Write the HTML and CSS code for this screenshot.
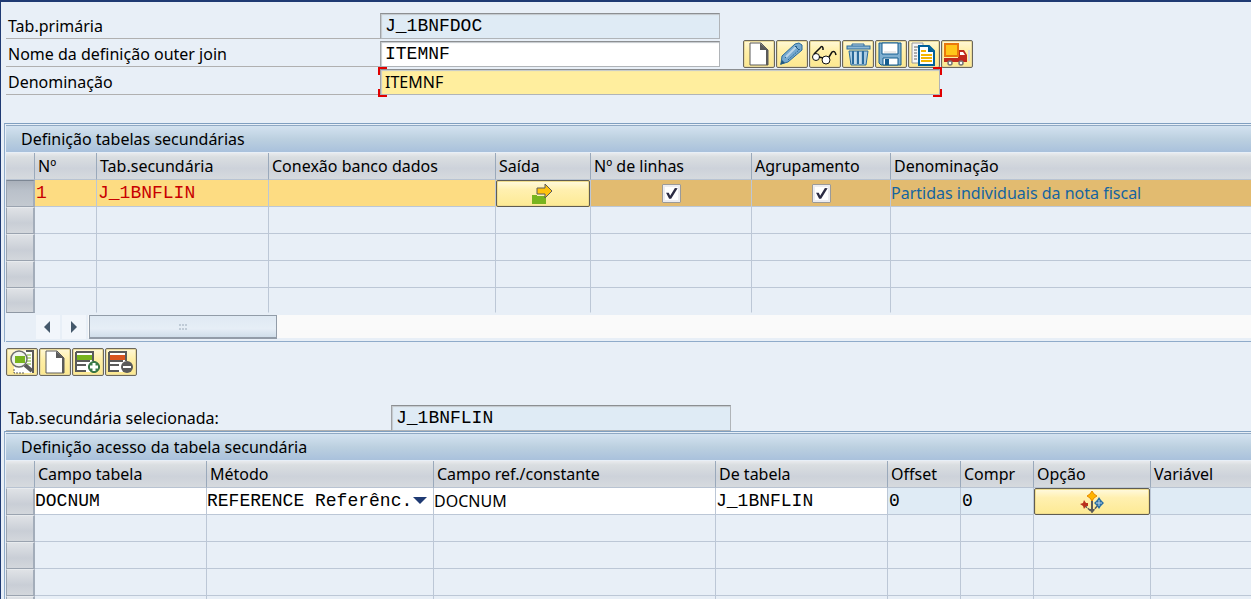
FILE: index.html
```
<!DOCTYPE html>
<html lang="pt-BR">
<head>
    <meta charset="UTF-8">
    <meta name="viewport" content="width=device-width, initial-scale=1.0">
    <title>Definição outer join</title>
    <link rel="stylesheet" href="styles.css">
</head>
<body>

<!-- shared icons -->
<svg class="sprite" aria-hidden="true">
    <symbol id="icon-page" viewBox="0 0 29 26">
        <path d="M6 2H17L24 9V24H6Z" fill="#fff" stroke="#5a5a5a"/>
        <path d="M16 2L24 9V24H22V9H16Z" fill="#5a5a5a"/>
    </symbol>
</svg>

<main class="screen">
    <form class="header-form">
        <div class="form-row">
            <label for="primary">Tab.primária</label>
            <input type="text" id="primary" class="field readonly mono" value="J_1BNFDOC" readonly>
        </div>
        <div class="form-row">
            <label for="join-name">Nome da definição outer join</label>
            <input type="text" id="join-name" class="field mono" value="ITEMNF">
            <div class="toolbar">
                <button type="button" class="tool" aria-label="Criar"><svg><use href="#icon-page"/></svg></button>
                <button type="button" class="tool" aria-label="Modificar">
                    <svg viewBox="0 0 29 26">
                        <path d="M4 23L5 15L18 3L22 2L25 4V9L11 21Z" fill="#76a9cf" stroke="#2a6a9b"/>
                        <path d="M8 17L20 5M11 19L23 8" stroke="#2a6a9b" stroke-dasharray="2 1"/>
                        <path d="M9 16L19 6" stroke="#b9d4e8" stroke-width="2"/>
                        <path d="M3 24L5 19L8 22Z" fill="#24597f"/>
                        <path d="M18 5L22 9" stroke="#24597f"/>
                    </svg>
                </button>
                <button type="button" class="tool" aria-label="Exibir">
                    <svg viewBox="0 0 29 26" fill="none" stroke="#111">
                        <circle cx="6" cy="16" r="3.5" fill="#fff"/>
                        <circle cx="16" cy="19" r="4" fill="#fff"/>
                        <path d="M9 16L13 17M4 13L10 7Q12 4 13 7V9M19 16L22 11Q25 9 26 14" stroke-width="1.5"/>
                    </svg>
                </button>
                <button type="button" class="tool" aria-label="Eliminar">
                    <svg viewBox="0 0 29 26">
                        <path d="M9 6V3H21V6" fill="#c4dbea" stroke="#2a6a9b"/>
                        <rect x="4" y="5" width="23" height="3" fill="#8db8d6" stroke="#2a6a9b"/>
                        <path d="M6 10H25L23 24H8Z" fill="#a9cbe1" stroke="#2a6a9b"/>
                        <path d="M10 10V23M15 10V23M20 10V23" stroke="#2a6a9b" stroke-width="2"/>
                        <path d="M12 11V23M17 11V23" stroke="#e4f0f7"/>
                    </svg>
                </button>
                <button type="button" class="tool" aria-label="Gravar">
                    <svg viewBox="0 0 29 26">
                        <path d="M3 2H25V24H5L3 22Z" fill="#7fafd0" stroke="#155c8e"/>
                        <path d="M6 2H22V13H6Z" fill="#fff" stroke="#155c8e"/>
                        <path d="M8 11H20" stroke="#d5d5d5"/>
                        <path d="M7 17H22V24H7Z" fill="#fff" stroke="#155c8e"/>
                        <path d="M9 18H13V24H9Z" fill="#155c8e"/>
                    </svg>
                </button>
                <button type="button" class="tool" aria-label="Copiar">
                    <svg viewBox="0 0 29 26">
                        <path d="M3 2H14V22H3Z" fill="#f7f7f7" stroke="#999"/>
                        <path d="M5 6H9M5 9H8M5 12H8M5 15H8M5 18H8" stroke="#666"/>
                        <path d="M10 5H20L25 10V24H10Z" fill="#fff" stroke="#00609a" stroke-width="2"/>
                        <path d="M19 5V11H25Z" fill="#00609a"/>
                        <path d="M12 10H17M12 14H23M12 17H23M12 20H23" stroke="#f5b400" stroke-width="2"/>
                    </svg>
                </button>
                <button type="button" class="tool" aria-label="Transportar">
                    <svg viewBox="0 0 29 26">
                        <path d="M26 9H28V20H26Z" fill="#d8d8d8"/>
                        <path d="M2 17H16V9H22L25 14V21H2Z" fill="#c0281c"/>
                        <path d="M18 11H21L23 14H18Z" fill="#fff"/>
                        <rect x="3" y="3" width="13" height="12" fill="#ffc61a" stroke="#e9780c" stroke-width="2"/>
                        <circle cx="8" cy="22" r="2" fill="#fff" stroke="#777" stroke-width="1.5"/>
                        <circle cx="19" cy="22" r="2" fill="#fff" stroke="#777" stroke-width="1.5"/>
                    </svg>
                </button>
            </div>
        </div>
        <div class="form-row">
            <label for="description">Denominação</label>
            <div class="focus-frame">
                <input type="text" id="description" class="field wide" value="ITEMNF">
            </div>
        </div>
    </form>

    <section class="panel">
        <h2>Definição tabelas secundárias</h2>
        <table class="grid">
            <colgroup>
                <col class="w-sel"><col class="w-num"><col class="w-table"><col class="w-method"><col class="w-output"><col class="w-lines"><col class="w-group"><col>
            </colgroup>
            <thead>
                <tr>
                    <th></th>
                    <th>Nº</th>
                    <th>Tab.secundária</th>
                    <th>Conexão banco dados</th>
                    <th>Saída</th>
                    <th>Nº de linhas</th>
                    <th>Agrupamento</th>
                    <th>Denominação</th>
                </tr>
            </thead>
            <tbody>
                <tr class="selected">
                    <td class="sel"></td>
                    <td class="mono">1</td>
                    <td class="mono">J_1BNFLIN</td>
                    <td></td>
                    <td>
                        <button type="button" class="cell-button" aria-label="Saída">
                            <svg viewBox="0 0 24 22">
                                <path d="M1 12H15V21H1Z" fill="#78b41e"/>
                                <path d="M6 10H16V13H6Z" fill="#fff3b8"/>
                                <path d="M6 5H14V1L21 8L14 15V11H6Z" fill="#ffc20e" stroke="#5a5a5a"/>
                            </svg>
                        </button>
                    </td>
                    <td class="dark check"><input type="checkbox" aria-label="Nº de linhas" checked></td>
                    <td class="dark check"><input type="checkbox" aria-label="Agrupamento" checked></td>
                    <td class="dark note">Partidas individuais da nota fiscal</td>
                </tr>
                <tr><td class="sel"></td><td></td><td></td><td></td><td></td><td></td><td></td><td></td></tr>
                <tr><td class="sel"></td><td></td><td></td><td></td><td></td><td></td><td></td><td></td></tr>
                <tr><td class="sel"></td><td></td><td></td><td></td><td></td><td></td><td></td><td></td></tr>
                <tr class="last"><td class="sel"></td><td></td><td></td><td></td><td></td><td></td><td></td><td></td></tr>
            </tbody>
        </table>
        <div class="scrollbar">
            <button type="button" class="arrow" aria-label="Esquerda"><svg viewBox="0 0 24 24"><path d="M14 6V18L8 12Z" fill="#44586b"/></svg></button>
            <button type="button" class="arrow" aria-label="Direita"><svg viewBox="0 0 24 24"><path d="M9 6V18L15 12Z" fill="#44586b"/></svg></button>
            <div class="track">
                <div class="thumb">
                    <svg viewBox="0 0 8 6"><path d="M0 1H2M3 1H5M6 1H8M0 5H2M3 5H5M6 5H8" stroke="#9aa9b8"/></svg>
                </div>
            </div>
        </div>
    </section>

    <div class="toolbar table-tools">
        <button type="button" class="tool" aria-label="Detalhes">
            <svg viewBox="0 0 29 26">
                <path d="M7 2H26V24H7Z" fill="#fff"/>
                <path d="M19 2H26V24" fill="none" stroke="#5a5a5a" stroke-width="2"/>
                <path d="M20 6H24M20 9H24M20 12H24M20 15H24" stroke="#78b41e"/>
                <path d="M7 20V24H18" fill="none" stroke="#5a5a5a" stroke-dasharray="2 1"/>
                <circle cx="12" cy="10" r="8" fill="#f2f5ee" stroke="#6d6d6d" stroke-width="1.5"/>
                <path d="M8 7H18V14H8Z" fill="#78b41e"/>
                <path d="M18 16L25 22" stroke="#5a5a5a" stroke-width="4"/>
            </svg>
        </button>
        <button type="button" class="tool" aria-label="Criar"><svg><use href="#icon-page"/></svg></button>
        <button type="button" class="tool" aria-label="Inserir linha">
            <svg viewBox="0 0 29 26">
                <path d="M3 2H21V23H3Z" fill="#fff"/>
                <path d="M3 3H20V12M3 3V23M3 12H17M3 16H13M3 22H13" fill="none" stroke="#5a5a5a" stroke-width="2"/>
                <path d="M4 6H19V11H4Z" fill="#78b41e"/>
                <circle cx="21" cy="18" r="5.5" fill="#3c7d4a" stroke="#2e6a3d"/>
                <path d="M21 14V22M17 18H25" stroke="#fff" stroke-width="3"/>
            </svg>
        </button>
        <button type="button" class="tool" aria-label="Eliminar linha">
            <svg viewBox="0 0 29 26">
                <path d="M3 2H21V23H3Z" fill="#fff"/>
                <path d="M3 3H20V12M3 3V23M3 12H17M3 16H13M3 22H13" fill="none" stroke="#5a5a5a" stroke-width="2"/>
                <path d="M4 6H19V11H4Z" fill="#d9541e"/>
                <circle cx="21" cy="18" r="6" fill="#5a5a5a"/>
                <path d="M17 18H25" stroke="#fff" stroke-width="2"/>
            </svg>
        </button>
    </div>

    <div class="form-row selected-table">
        <label for="secondary">Tab.secundária selecionada:</label>
        <input type="text" id="secondary" class="field readonly mono" value="J_1BNFLIN" readonly>
    </div>

    <section class="panel">
        <h2>Definição acesso da tabela secundária</h2>
        <table class="grid">
            <colgroup>
                <col class="w-sel"><col class="w-table"><col class="w-method"><col class="w-ref"><col class="w-table"><col class="w-size"><col class="w-size"><col class="w-option"><col>
            </colgroup>
            <thead>
                <tr>
                    <th></th>
                    <th>Campo tabela</th>
                    <th>Método</th>
                    <th>Campo ref./constante</th>
                    <th>De tabela</th>
                    <th>Offset</th>
                    <th>Compr</th>
                    <th>Opção</th>
                    <th>Variável</th>
                </tr>
            </thead>
            <tbody>
                <tr>
                    <td class="sel"></td>
                    <td class="edit"><input type="text" class="mono" aria-label="Campo tabela" value="DOCNUM"></td>
                    <td class="edit combo">
                        <select class="mono" aria-label="Método">
                            <option>REFERENCE Referênc..</option>
                        </select>
                    </td>
                    <td class="edit"><input type="text" aria-label="Campo ref./constante" value="DOCNUM"></td>
                    <td class="edit"><input type="text" class="mono" aria-label="De tabela" value="J_1BNFLIN"></td>
                    <td class="mono locked">0</td>
                    <td class="mono locked">0</td>
                    <td>
                        <button type="button" class="cell-button" aria-label="Opção">
                            <svg viewBox="0 0 24 22">
                                <path d="M4 14L12 21L19 13" fill="none" stroke="#5a5a5a" stroke-width="1.5" stroke-dasharray="4 1"/>
                                <path d="M12 7V20" stroke="#5a5a5a" stroke-width="2"/>
                                <path d="M9 18H15L12 22Z" fill="#5a5a5a"/>
                                <path d="M12 0L14 3L17 5L14 7L12 10L10 7L7 5L10 3Z" fill="#ffb400" stroke="#e88b00"/>
                                <path d="M4 9L6 12H8V15H6L4 18L3 15L0 13L3 12Z" fill="#b9301c"/>
                                <path d="M19 6L21 9L24 12L21 15L19 18L17 15L14 12L17 9Z" fill="#2a6fa3"/>
                                <path d="M19 9V15M16 12H22" stroke="#b9d4e8"/>
                            </svg>
                        </button>
                    </td>
                    <td class="locked"></td>
                </tr>
                <tr><td class="sel"></td><td></td><td></td><td></td><td></td><td></td><td></td><td></td><td></td></tr>
                <tr><td class="sel"></td><td></td><td></td><td></td><td></td><td></td><td></td><td></td><td></td></tr>
                <tr><td class="sel"></td><td></td><td></td><td></td><td></td><td></td><td></td><td></td><td></td></tr>
                <tr><td class="sel"></td><td></td><td></td><td></td><td></td><td></td><td></td><td></td><td></td></tr>
            </tbody>
        </table>
    </section>
</main>

</body>
</html>
```
FILE: styles.css
```
*,
*::before,
*::after {
    box-sizing: border-box;
}

body {
    margin: 0;
    height: 100vh;
    overflow: hidden;
    background-color: #e8eff7;
    color: #000;
    font-family: "Noto Sans", Tahoma, sans-serif;
    font-size: 16px;
    font-variant-ligatures: none;
}

.sprite {
    display: none;
}

.screen {
    min-height: 100vh;
    border-top: 2px solid #1f3a73;
    border-left: 1px solid #1f3a73;
    padding-left: 3px;
}

input,
select,
button {
    margin: 0;
    font: inherit;
    color: inherit;
}

.mono {
    font-family: "Liberation Mono", "Courier New", monospace;
    font-size: 18px;
}

/* form */
.header-form {
    display: flex;
    flex-direction: column;
    gap: 2px;
    padding: 11px 0 28px 2px;
}

.form-row {
    display: flex;
    height: 26px;
}

.form-row label {
    width: 374px;
    padding-left: 2px;
    line-height: 26px;
    border-bottom: 1px solid #b0b0b0;
}

.field {
    width: 340px;
    height: 26px;
    padding: 0 4px;
    background-color: #fff;
    border: 1px solid #b0b4b8;
    border-top: 1px solid #8c8f92;
    border-left: 1px solid #a0a3a6;
    box-shadow: inset 1px 1px 1px #c4c8cc;
    outline: none;
}

.field.readonly {
    background-color: #dfebf5;
}

.field.wide {
    display: block;
    width: 560px;
    background-color: #ffee9e;
}

/* red corners round the active field */
.focus-frame {
    position: relative;
}

.focus-frame::before,
.focus-frame::after {
    content: "";
    position: absolute;
    top: -2px;
    bottom: -2px;
    width: 9px;
    background:
        linear-gradient(#e00000, #e00000) 0 0 / 100% 2px no-repeat,
        linear-gradient(#e00000, #e00000) 0 100% / 100% 2px no-repeat;
}

.focus-frame::before {
    left: -2px;
    border-left: 2px solid;
    border-image: linear-gradient(#e00000 9px, transparent 9px calc(100% - 9px), #e00000 calc(100% - 9px)) 2;
}

.focus-frame::after {
    right: -2px;
    border-right: 2px solid;
    border-image: linear-gradient(#e00000 9px, transparent 9px calc(100% - 9px), #e00000 calc(100% - 9px)) 2;
}

.toolbar {
    display: flex;
    gap: 1px;
}

.form-row .toolbar {
    margin: -1px 0 -1px 23px;
}

.tool {
    width: 32px;
    height: 28px;
    padding: 0;
    border: 1px solid #6b675c;
    border-radius: 2px;
    background: linear-gradient(#fff8d8, #ffefa8 40%, #fce88f);
    box-shadow: inset 0 0 0 1px #e8d99a;
}

.tool svg {
    display: block;
    width: 29px;
    height: 26px;
}

/* table panels */
.panel {
    border-top: 1px solid #7f9fc0;
    border-left: 1px solid #8fabca;
    padding: 1px 0 0 1px;
}

.panel h2 {
    height: 28px;
    margin: 0;
    padding-left: 15px;
    border-top: 1px solid #8fa9c4;
    border-bottom: 1px solid #e8eff7;
    background: linear-gradient(#d3e2f0, #bcd0e0 50%, #a9c1dc);
    font-size: 16px;
    font-weight: normal;
    line-height: 26px;
}

.grid {
    width: 100%;
    table-layout: fixed;
    border-spacing: 0;
}

.w-sel { width: 29px; }
.w-num { width: 62px; }
.w-table { width: 172px; }
.w-method { width: 227px; }
.w-output { width: 95px; }
.w-lines { width: 161px; }
.w-group { width: 139px; }
.w-ref { width: 282px; }
.w-size { width: 73px; }
.w-option { width: 117px; }

.grid th {
    height: 27px;
    padding: 0 0 0 3px;
    border-right: 1px solid #9aa9bb;
    border-bottom: 1px solid #b8c3d2;
    background: linear-gradient(#e9ebee, #dadee1 15%, #cdd2da 60%, #d6dade);
    font-weight: normal;
    line-height: 26px;
    text-align: left;
    white-space: nowrap;
}

.grid td {
    height: 27px;
    padding: 0 0 0 1px;
    border-right: 1px solid #bcc7d6;
    border-bottom: 1px solid #bcc7d6;
    line-height: 24px;
    white-space: nowrap;
}

.grid th:last-child,
.grid td:last-child {
    border-right: 0;
}

.grid .sel {
    border: 1px solid #9aa3af;
    border-top-color: #e8ebee;
    border-right: 2px solid #a3adba;
    background: linear-gradient(#dfe2e6, #c9ced6 60%, #d3d7dc);
}

.grid .last td {
    height: 25px;
    border-bottom-color: transparent;
}

.grid .last .sel {
    border-bottom-color: #8f98a4;
}

.grid .selected td {
    background-color: #fddc82;
    color: #c80000;
}

.grid .selected .sel {
    border-top-color: #7d8794;
    background: linear-gradient(#a9b0ba, #bac1ca 40%, #c3c9d0);
}

.grid .selected .dark {
    background-color: #e2bb70;
}

.grid .selected .note {
    padding-left: 0;
    color: #1464a0;
}

.check {
    text-align: center;
}

.check input {
    appearance: none;
    display: block;
    width: 19px;
    height: 19px;
    margin: 0 auto;
    border: 1px solid #9a9a9a;
    border-radius: 1px;
    background-color: #fff;
    box-shadow: inset 0 0 0 2px #ececf0;
}

.check input:checked::before {
    content: "";
    display: block;
    width: 17px;
    height: 17px;
    background-color: #2c2c44;
    clip-path: polygon(18% 48%, 34% 48%, 42% 66%, 70% 20%, 86% 22%, 48% 84%, 36% 84%);
}

.grid td:has(.cell-button) {
    padding: 0;
    border-bottom: 0;
}

.cell-button {
    display: block;
    width: 100%;
    height: 27px;
    padding: 0;
    border: 1px solid #5f5c52;
    border-radius: 2px;
    background: linear-gradient(#fffae0, #fff0b0 35%, #fdea94);
    box-shadow: inset 0 0 0 1px #f0dd8e;
}

.cell-button svg {
    display: block;
    width: 24px;
    height: 22px;
    margin: 0 auto;
}

.grid .edit {
    padding: 0;
    background-color: #fff;
}

.grid .edit input,
.grid .edit select {
    display: block;
    width: 100%;
    height: 26px;
    padding: 0;
    border: 0;
    background: transparent;
    outline: none;
}

.grid .edit select {
    appearance: none;
    padding: 0 22px 0 0;
    overflow: hidden;
}

.combo {
    position: relative;
}

.combo::after {
    content: "";
    position: absolute;
    top: 9px;
    right: 6px;
    border: 7px solid transparent;
    border-top: 7px solid #1f3a73;
    border-bottom: 0;
    pointer-events: none;
}

.grid .locked {
    background-color: #dfebf5;
}

.scrollbar {
    display: flex;
    gap: 2px;
    height: 29px;
    padding: 2px 0 3px 30px;
    border-bottom: 1px solid #8fabca;
}

.arrow {
    width: 24px;
    height: 24px;
    padding: 0;
    border: 0;
    background-color: #f2f6fb;
}

.arrow svg {
    display: block;
    width: 24px;
    height: 24px;
}

.track {
    flex: 1;
    padding-left: 1px;
    background-color: #fafafa;
}

.thumb {
    display: flex;
    align-items: center;
    justify-content: center;
    width: 188px;
    height: 24px;
    border: 1px solid #929ca8;
    border-bottom-width: 2px;
    background: linear-gradient(#dfe9f3, #e6eef6 60%, #d0deea);
}

.thumb svg {
    width: 8px;
    height: 6px;
}

.table-tools {
    padding: 6px 0 29px 2px;
}

.selected-table {
    padding-left: 2px;
}

.selected-table label {
    width: 385px;
}
```
